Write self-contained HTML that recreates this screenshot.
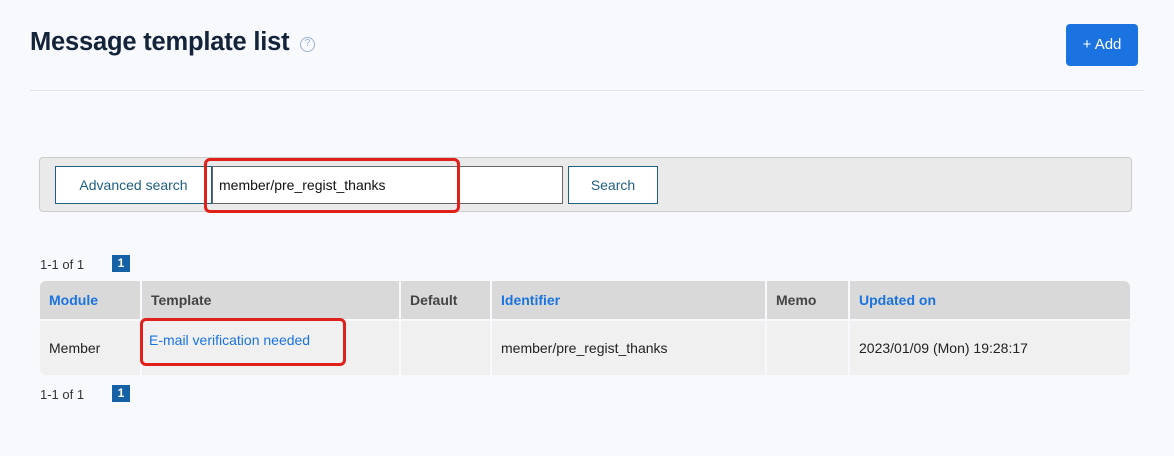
<!DOCTYPE html><html><head><style>
*{box-sizing:border-box;margin:0;padding:0}
body{width:1174px;height:456px;background:#f7f9fc;font-family:"Liberation Sans",sans-serif;position:relative;overflow:hidden;color:#222}
.a{position:absolute}
h1{position:absolute;left:30px;top:28px;font-size:25.5px;font-weight:bold;color:#13233a;letter-spacing:-0.2px}
.q{left:300px;top:37px;width:15px;height:15px;border:1.5px solid #9bb3cc;border-radius:50%;font-size:10px;color:#9bb3cc;text-align:center;line-height:12px}
.add{left:1066px;top:24px;width:72px;height:42px;background:#1a73e0;border-radius:4px;color:#fff;font-size:15px;text-align:center;line-height:42px}
.hr{left:30px;top:90px;width:1114px;height:1px;background:#dde6ef}
.bar{left:39px;top:157px;width:1093px;height:55px;background:#eaeaea;border:1px solid #ccc;border-radius:4px}
.btn{background:#fff;border:1px solid #1f5f80;color:#1f5f80;font-size:14px;text-align:center;line-height:36px;height:38px;top:166px}
.inp{left:212px;top:166px;width:351px;height:38px;background:#fff;border:1px solid #666;font-size:14px;line-height:36px;padding-left:6px;color:#111}
.red{border:3px solid #e0201a;border-radius:6px}
.pg{font-size:13px;color:#333}
.pn{width:18px;height:17px;background:#1561a6;color:#fff;font-size:12px;font-weight:bold;text-align:center;line-height:17px}
.c{position:absolute;font-size:14px;padding-left:9px;display:flex;align-items:center}
.h{background:#d9d9d9;top:281px;height:38px;font-weight:bold;color:#444}
.r{background:#f0f0f0;top:321px;height:54px;color:#222}
.bl{color:#1a73e0}
</style></head><body>
<h1>Message template list</h1>
<div class="a q">?</div>
<div class="a add">+ Add</div>
<div class="a hr"></div>
<div class="a bar"></div>
<div class="a btn" style="left:55px;width:157px">Advanced search</div>
<div class="a inp">member/pre_regist_thanks</div>
<div class="a btn" style="left:568px;width:90px">Search</div>
<div class="a red" style="left:204px;top:158px;width:256px;height:55px"></div>
<div class="a pg" style="left:40px;top:257px">1-1 of 1</div>
<div class="a pn" style="left:112px;top:255px">1</div>
<div class="c h bl" style="left:40px;width:100px;border-top-left-radius:6px">Module</div>
<div class="c h" style="left:142px;width:257px">Template</div>
<div class="c h" style="left:401px;width:89px">Default</div>
<div class="c h bl" style="left:492px;width:273px">Identifier</div>
<div class="c h" style="left:767px;width:81px">Memo</div>
<div class="c h bl" style="left:850px;width:280px;border-top-right-radius:6px">Updated on</div>
<div class="c r" style="left:40px;width:100px;border-bottom-left-radius:6px">Member</div>
<div class="c r bl" style="left:142px;width:257px;align-items:flex-start;padding-top:11px;padding-left:7px">E-mail verification needed</div>
<div class="c r" style="left:401px;width:89px"></div>
<div class="c r" style="left:492px;width:273px">member/pre_regist_thanks</div>
<div class="c r" style="left:767px;width:81px"></div>
<div class="c r" style="left:850px;width:280px;border-bottom-right-radius:6px">2023/01/09 (Mon) 19:28:17</div>
<div class="a red" style="left:140px;top:318px;width:206px;height:48px"></div>
<div class="a pg" style="left:40px;top:387px">1-1 of 1</div>
<div class="a pn" style="left:112px;top:385px">1</div>
</body></html>
